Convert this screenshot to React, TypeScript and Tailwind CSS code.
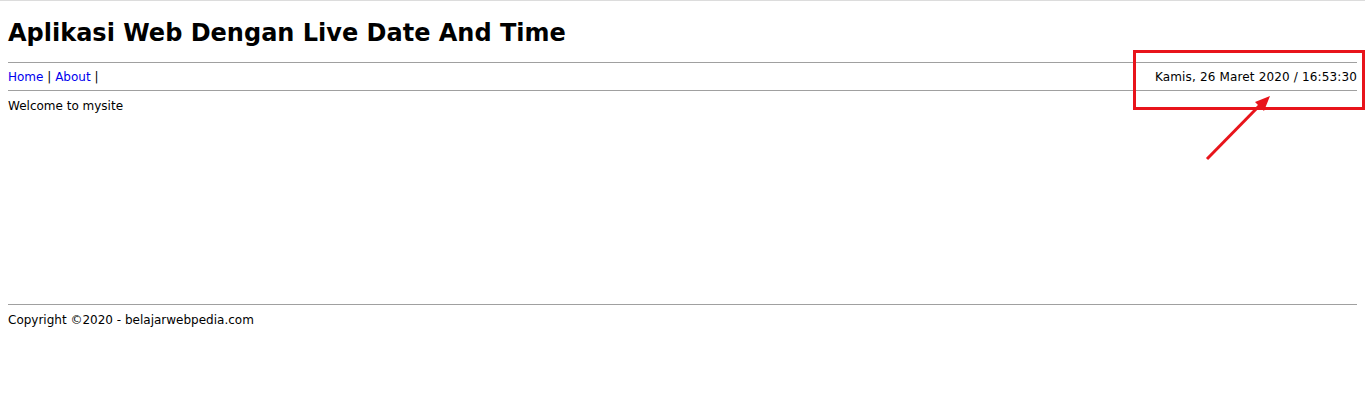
export default function App() {
  return (
    <div className="relative h-[418px] w-full overflow-hidden bg-white text-black [font-family:'DejaVu_Sans',Verdana,sans-serif]">
      <div className="h-px w-full bg-[#dcdcdc]" />
      <div className="px-2">
        <h1 className="mt-[18px] mb-[15px] text-[24px] font-bold leading-[28px]">
          Aplikasi Web Dengan Live Date And Time
        </h1>
        <hr className="border-0 border-t border-[#a0a0a0]" />
        <div className="flex h-[27px] items-center justify-between text-[12px]">
          <div>
            <a href="#" className="text-[#0000ee]">Home</a> |{" "}
            <a href="#" className="text-[#0000ee]">About</a> |
          </div>
          <div className="tracking-[0.15px]">Kamis, 26 Maret 2020 / 16:53:30</div>
        </div>
        <hr className="border-0 border-t border-[#a0a0a0]" />
        <div className="h-[213px] pt-[7px] text-[12px] leading-[16px]">Welcome to mysite</div>
        <hr className="border-0 border-t border-[#a0a0a0]" />
        <div className="pt-[7px] text-[12px] leading-[16px]">Copyright ©2020 - belajarwebpedia.com</div>
      </div>

      {/* annotation */}
      <div className="absolute left-[1133px] top-[50px] h-[60px] w-[232px] border-[3px] border-[#e8141b]" />
      <svg className="absolute left-0 top-0" width="1365" height="418" viewBox="0 0 1365 418">
        <line x1="1207" y1="159" x2="1260" y2="105" stroke="#e8141b" strokeWidth="3" />
        <polygon points="1270,96 1255,102 1264,111" fill="#e8141b" />
      </svg>
    </div>
  );
}
